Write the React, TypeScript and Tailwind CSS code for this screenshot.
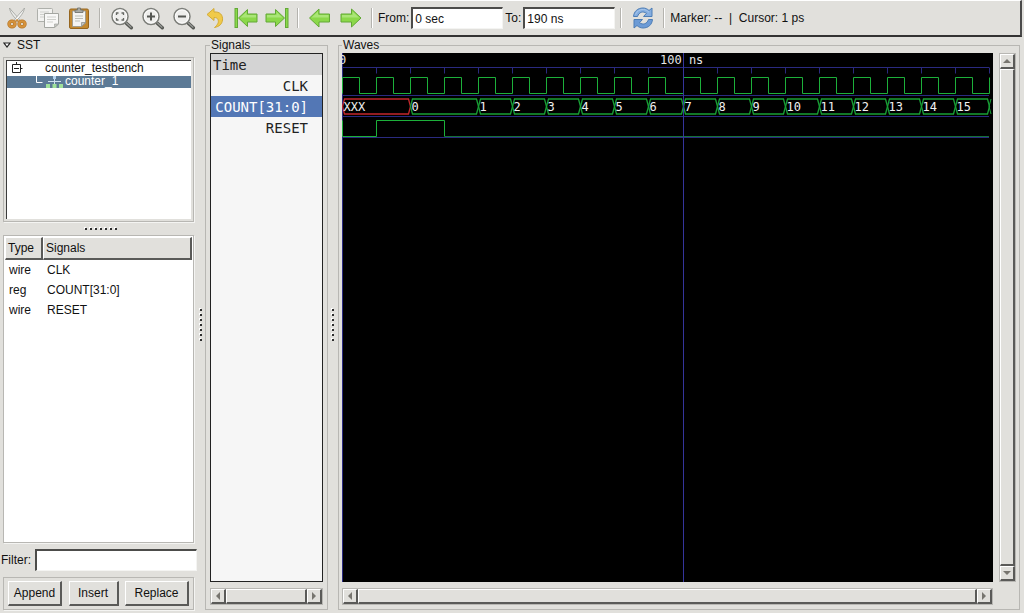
import type { ReactNode } from 'react';

const signals = [
  { type: 'wire', name: 'CLK' },
  { type: 'reg', name: 'COUNT[31:0]' },
  { type: 'wire', name: 'RESET' },
];

// One clock period is 10 ns
const PERIOD = 34;
const PERIODS = 19;
const END = PERIOD * PERIODS + 1;

const busValues = [
  { label: 'XXX', start: 0, end: 2 },
  { label: '0', start: 2, end: 4 },
  ...Array.from({ length: 15 }, (_, i) => ({ label: String(i + 1), start: i + 4, end: i + 5 })),
];

const periodX = (n: number) => Math.round(n * 34.05) + 0.5;

const clockPath = Array.from({ length: PERIODS }, (_, i) => {
  const x = periodX(i);
  return `${i === 0 ? 'M' : 'L'}${x} 40.5V24.5H${x + 17}V40.5H${periodX(i + 1)}`;
}).join('') + 'V24.5';

function ToolButton({ label, children }: { label: string; children: ReactNode }) {
  return (
    <button type="button" aria-label={label} className="flex h-7 w-[31px] shrink-0 items-center justify-center">
      <svg viewBox="0 0 24 24" className="size-6">{children}</svg>
    </button>
  );
}

function Separator() {
  return (
    <div className="flex w-3 shrink-0 justify-center">
      <div className="h-5 w-0.5 border-l border-r border-l-[#b4b3ae] border-r-white" />
    </div>
  );
}

function Magnifier({ children }: { children: ReactNode }) {
  return (
    <>
      <path d="M15.5 16.5 L21.3 21.8" stroke="#555753" strokeWidth="3.4" strokeLinecap="round" />
      <path d="M16.5 17 L21 21.2" stroke="#999b97" strokeWidth="1.2" strokeLinecap="round" />
      <circle cx="10" cy="10.5" r="8" fill="#eeeeec" stroke="#7c7e79" strokeWidth="1.5" />
      <circle cx="10" cy="10.5" r="6.6" fill="none" stroke="#fff" strokeWidth="0.9" />
      {children}
    </>
  );
}

function Grip({ vertical }: { vertical?: boolean }) {
  return (
    <div className={vertical ? 'flex flex-col gap-[3px]' : 'flex gap-[3px]'}>
      {Array.from({ length: 7 }, (_, i) => (
        <div key={i} className="size-0.5 bg-[#2e2e2e] shadow-[-1px_-1px_0_#fff]" />
      ))}
    </div>
  );
}

const raised = 'border-t border-l border-r-2 border-b-2 border-t-white border-l-white border-r-[#5a5a58] border-b-[#5a5a58] bg-[#e1e0dc]';
const frame = 'border border-[#b8b7b3] shadow-[1px_1px_0_#f4f4f2]';
const entry = 'h-[22px] min-w-0 border-t-2 border-l-2 border-r border-b border-t-[#4c4c4a] border-l-[#4c4c4a] border-r-[#f4f4f2] border-b-[#f4f4f2] bg-white px-0.5 outline-none';

function ScrollArrow({ label, points }: { label: string; points: string }) {
  return (
    <button type="button" aria-label={label} className={`flex size-[15px] shrink-0 items-center justify-center ${raised}`}>
      <svg viewBox="0 0 8 8" className="size-2"><polygon points={points} fill="#77756f" /></svg>
    </button>
  );
}

function HorizontalScroll() {
  return (
    <div className="flex h-[17px] border border-[#b8b7b3] bg-[#e1e0dc]">
      <ScrollArrow label="Scroll left" points="6,0 6,8 2,4" />
      <div className={`h-[15px] flex-1 ${raised}`} />
      <ScrollArrow label="Scroll right" points="2,0 2,8 6,4" />
    </div>
  );
}

function Toolbar() {
  return (
    <header className="mr-0.5 flex h-[37px] shrink-0 items-center border-t border-r-2 border-b-2 border-t-white border-r-[#4a4a4a] border-b-[#333] pl-px">
      <ToolButton label="Cut">
        <path d="M4.5 2 C5 6 8 10 13.5 16 L15 14.5 C12 10 7.5 6 4.5 2Z" fill="#eeeeec" stroke="#a4a6a1" strokeWidth="0.9" />
        <path d="M19.5 2 C19 6 16 10 10.5 16 L9 14.5 C12 10 16.5 6 19.5 2Z" fill="#f6f6f5" stroke="#a4a6a1" strokeWidth="0.9" />
        <ellipse cx="7" cy="18" rx="3" ry="2.7" fill="none" stroke="#b4762a" strokeWidth="3.4" />
        <ellipse cx="17" cy="18" rx="3" ry="2.7" fill="none" stroke="#b4762a" strokeWidth="3.4" />
        <ellipse cx="7" cy="18" rx="3" ry="2.7" fill="none" stroke="#d6933c" strokeWidth="2" />
        <ellipse cx="17" cy="18" rx="3" ry="2.7" fill="none" stroke="#d6933c" strokeWidth="2" />
        <path d="M10 14.5 L12 13 L14 14.5 L12 16Z" fill="#c98a3a" />
      </ToolButton>
      <ToolButton label="Copy">
        <rect x="1.5" y="2.5" width="15" height="13" rx="1" fill="#f2f2f0" stroke="#aeb0ab" />
        <path d="M4 6h9M4 8.5h8M4 11h5" stroke="#cfd0cc" />
        <path d="M8.5 7.5h14v10.500l-4 3.500h-10z" fill="#f8f8f7" stroke="#a4a6a1" />
        <path d="M11 11h9M11 13.500h9M11 16h6" stroke="#cfd0cc" />
        <path d="M22.500 18h-4v3.500z" fill="#c6c7c3" stroke="#a4a6a1" strokeWidth="0.7" />
      </ToolButton>
      <ToolButton label="Paste">
        <rect x="2.500" y="3" width="19" height="19.500" rx="1.500" fill="#c4892f" stroke="#96661f" />
        <path d="M5.500 5h13v12l-4 3.500h-9z" fill="#f4f4f2" stroke="#94958f" strokeWidth="0.8" />
        <path d="M8 10h8M8 12.500h8M8 15h5" stroke="#babdb6" />
        <path d="M18.500 16.500h-4v4z" fill="#c3c5c0" stroke="#888a85" strokeWidth="0.7" />
        <path d="M8 6.500V4h2.500V2h3v2H16v2.500z" fill="#a9aba6" stroke="#73756f" strokeWidth="0.9" />
      </ToolButton>
      <Separator />
      <ToolButton label="Zoom fit">
        <Magnifier>
          <path d="M6.500 9V7h2M11.500 7h2v2M13.500 12v2h-2M8.500 14h-2v-2" fill="none" stroke="#666864" strokeWidth="1.300" />
        </Magnifier>
      </ToolButton>
      <ToolButton label="Zoom in">
        <Magnifier><path d="M6 10.500h8M10 6.500v8" stroke="#555753" strokeWidth="2" /></Magnifier>
      </ToolButton>
      <ToolButton label="Zoom out">
        <Magnifier><path d="M6 10.500h8" stroke="#555753" strokeWidth="2" /></Magnifier>
      </ToolButton>
      <ToolButton label="Undo">
        <path d="M4 8.500 L11 2.500 V6 C17 5.500 20 9 19.500 14 C19 18 16.500 20.500 11.500 21.500 C15 18.500 16 16 15 13.500 C14.300 12 13 11.500 11 11.500 V14.500Z" fill="#f0ca4a" stroke="#d3ab37" strokeWidth="1" strokeLinejoin="round" />
      </ToolButton>
      <ToolButton label="Go to start">
        <rect x="1" y="2.500" width="2.500" height="19" fill="#8bd84a" stroke="#62a836" />
        <path d="M4.500 12 L13.500 3.500 V8 H23 V16 H13.500 V20.500Z" fill="#8bd84a" stroke="#62a836" strokeLinejoin="round" />
        <path d="M6.500 11.500 L12.500 6 V9 H22 V11.500Z" fill="#aae577" />
      </ToolButton>
      <ToolButton label="Go to end">
        <rect x="20.500" y="2.500" width="2.500" height="19" fill="#8bd84a" stroke="#62a836" />
        <path d="M19.500 12 L10.500 3.500 V8 H1 V16 H10.500 V20.500Z" fill="#8bd84a" stroke="#62a836" strokeLinejoin="round" />
        <path d="M17.500 11.500 L11.500 6 V9 H2 V11.500Z" fill="#aae577" />
      </ToolButton>
      <Separator />
      <ToolButton label="Previous edge">
        <path d="M1.500 12 L11 3 V8 H21.500 V16 H11 V21Z" fill="#8bd84a" stroke="#62a836" strokeLinejoin="round" />
        <path d="M3.500 11.500 L10 5.500 V9 H20.500 V11.500Z" fill="#aae577" />
      </ToolButton>
      <ToolButton label="Next edge">
        <path d="M22 12 L12.500 3 V8 H2 V16 H12.500 V21Z" fill="#8bd84a" stroke="#62a836" strokeLinejoin="round" />
        <path d="M20 11.500 L13.500 5.500 V9 H3 V11.500Z" fill="#aae577" />
      </ToolButton>
      <Separator />
      <label htmlFor="from" className="pr-0.5">From:</label>
      <input id="from" defaultValue="0 sec" className={`${entry} w-[92px]`} />
      <label htmlFor="to" className="pr-0.5 pl-0.5">To:</label>
      <input id="to" defaultValue="190 ns" className={`${entry} w-[92px]`} />
      <Separator />
      <ToolButton label="Reload">
        <path d="M2.500 10.500 C3 5.500 6.500 2 12 2 C14.500 2 16.500 3 18 4.500 L21 2 V10.500 H12.500 L15.500 7.300 C12 4.800 8 6 6.500 10.500Z" fill="#84ade0" stroke="#4d7db5" strokeLinejoin="round" />
        <path d="M21.500 13.500 C21 18.500 17.500 22 12 22 C9.500 22 7.500 21 6 19.500 L3 22 V13.500 H11.500 L8.500 16.700 C12 19.200 16 18 17.500 13.500Z" fill="#6c9bd6" stroke="#4d7db5" strokeLinejoin="round" />
        <path d="M4.500 8.500 C6 5 9 3.300 12.500 3.500 C14.500 3.600 16.500 4.800 18 6.300" fill="none" stroke="#a9c7ea" />
      </ToolButton>
      <Separator />
      <p className="whitespace-pre">Marker: --  |  Cursor: 1 ps</p>
    </header>
  );
}

function Sidebar() {
  return (
    <aside className="flex w-[197px] shrink-0 flex-col pb-[3px]">
      <h2 className="flex h-5 shrink-0 items-center gap-1.5 pb-1 pl-[3px]">
        <svg viewBox="0 0 8 8" className="size-2"><path d="M1 2h6L4 6z" fill="#fff" stroke="#222" strokeWidth="1.200" /></svg>
        SST
      </h2>
      <div className={`mr-[3px] ml-[3px] h-[165px] shrink-0 p-0.5 ${frame}`}>
        <ul className="h-full border-t border-l border-[#3c3c3c] bg-white">
          <li className="flex h-[15px] items-center leading-[15px]">
            <svg viewBox="0 0 16 15" className="h-[15px] w-4 shrink-0" fill="none" stroke="#222">
              <path d="M5.500 3.500h8v8h-8zM7 7.500h5M9.500 1v2M13.500 7.500h2" />
            </svg>
            <span className="pl-[22px]">counter_testbench</span>
          </li>
          <li className="flex h-3 items-center bg-[#5c7a96] leading-3 text-white">
            <svg viewBox="0 0 56 12" className="h-3 w-14 shrink-0">
              <path d="M29.500 0v6.500h6" fill="none" stroke="#fff" />
              <path d="M47.500 1v7M41 5.500h13" fill="none" stroke="#cfe0ee" />
              <rect x="46" y="0" width="3" height="3" fill="#b4d2ee" />
              <path d="M39 8h4v4h-4zM45.500 8h4v4h-4zM52 8h4v4h-4z" fill="#9fe09a" />
            </svg>
            <span className="pb-0.5 pl-0.5">counter_1</span>
          </li>
        </ul>
      </div>
      <div className="flex h-[13px] shrink-0 items-center justify-center pl-1"><Grip /></div>
      <div className={`mr-[3px] ml-[3px] min-h-0 flex-1 bg-white p-px ${frame}`}>
        <table className="w-full table-fixed border-separate border-spacing-0 text-left">
          <thead>
            <tr className="h-[23px]">
              <th className={`w-[38px] pl-0.5 font-normal ${raised}`}>Type</th>
              <th className={`pl-0.5 font-normal ${raised}`}>Signals</th>
            </tr>
          </thead>
          <tbody>
            {signals.map((signal) => (
              <tr key={signal.name} className="h-5">
                <td className="pl-1">{signal.type}</td>
                <td className="pl-1">{signal.name}</td>
              </tr>
            ))}
          </tbody>
        </table>
      </div>
      <div className="flex h-[34px] shrink-0 items-center gap-1 pl-px">
        <label htmlFor="filter">Filter:</label>
        <input id="filter" className={`${entry} flex-1`} />
      </div>
      <div className={`mr-[3px] ml-[3px] flex h-[33px] shrink-0 items-center justify-between px-1 ${frame}`}>
        <button type="button" className={`h-[25px] w-[54px] ${raised}`}>Append</button>
        <button type="button" className={`h-[25px] w-[50px] ${raised}`}>Insert</button>
        <button type="button" className={`h-[25px] w-16 ${raised}`}>Replace</button>
      </div>
    </aside>
  );
}

function SignalList() {
  return (
    <fieldset className="mt-px mb-[3px] flex w-[123px] shrink-0 flex-col border border-[#b8b7b3] px-1 pb-1">
      <legend className="h-[15px] px-px leading-[15px]">Signals</legend>
      <div className="min-h-0 flex-1 border border-[#222] bg-[#f6f6f6] font-['DejaVu_Sans_Mono',monospace] text-sm leading-[22px] text-[#222]">
        <div className="h-[21px] bg-[#d4d4d4] pl-0.5">Time</div>
        <div className="h-[21px] pr-[14px] text-right">CLK</div>
        <div className="h-[21px] bg-[#5377b5] pr-[14px] text-right text-white">COUNT[31:0]</div>
        <div className="h-[21px] pr-[14px] text-right">RESET</div>
      </div>
      <div className="pt-1.5"><HorizontalScroll /></div>
    </fieldset>
  );
}

function Waves() {
  return (
    <fieldset className="mt-px mr-1 mb-[3px] flex min-w-0 flex-1 flex-col border border-[#b8b7b3] px-[3px] pb-1">
      <legend className="h-[15px] px-px leading-[15px]">Waves</legend>
      <div className="grid min-h-0 flex-1 grid-cols-[minmax(0,1fr)_17px] grid-rows-[minmax(0,1fr)_17px] gap-x-[6px] gap-y-1.5">
        <div className="min-h-0 overflow-hidden bg-black">
          <svg className="block h-full w-full font-['DejaVu_Sans_Mono',monospace] text-xs" fill="none">
            {/* time ruler and row separators */}
            <g stroke="#2a2a80">
              <path d={`M0 14.500H${END}M0 42.500H${END}M0 63.500H${END}M0 84.500H${END}`} />
              {Array.from({ length: PERIODS }, (_, i) => (
                <path key={i} d={`M${periodX(i + 1)} 14.500V20.500`} />
              ))}
              <line x1="0.5" y1="0" x2="0.5" y2="100%" />
            </g>
            <text x="-3" y="11" fill="#e6e6e6">0</text>
            <text x="318" y="11" fill="#e6e6e6">100 ns</text>

            <path d={clockPath} stroke="#1cb03a" />

            {busValues.map(({ label, start, end }) => {
              const a = periodX(start);
              const b = periodX(end);
              return (
                <g key={label}>
                  <path
                    d={`M${a} 53.500L${a + 2} 46H${b - 2}L${b} 53.500L${b - 2} 61H${a + 2}Z`}
                    stroke={label === 'XXX' ? '#c3272b' : '#18a035'}
                    strokeWidth="1.300"
                  />
                  <text x={a + 1} y="58" fill="#f0f0f0">{label}</text>
                </g>
              );
            })}
            <path d={`M${END + 2} 46L${END} 53.500L${END + 2} 61`} stroke="#18a035" />

            <path d={`M0.500 67.500V83.500H${periodX(1)}V67.500H${periodX(3)}V83.500`} stroke="#1cb03a" />
            <path d={`M${periodX(3)} 83.500H${END}`} stroke="#157038" />
            <line x1="341.5" y1="0" x2="341.5" y2="100%" stroke="#34349c" />
          </svg>
        </div>
        <div className="flex flex-col border border-[#b8b7b3]">
          <ScrollArrow label="Scroll up" points="0,6 8,6 4,2" />
          <div className={`w-[15px] flex-1 ${raised}`} />
          <ScrollArrow label="Scroll down" points="0,2 8,2 4,6" />
        </div>
        <HorizontalScroll />
      </div>
    </fieldset>
  );
}

export default function App() {
  return (
    <div className="flex h-screen flex-col overflow-hidden bg-[#e1e0dc] font-['Liberation_Sans',Arial,sans-serif] text-xs text-[#111]">
      <Toolbar />
      <main className="flex min-h-0 flex-1">
        <Sidebar />
        <div className="flex w-2 shrink-0 items-center justify-center"><Grip vertical /></div>
        <SignalList />
        <div className="flex w-2.5 shrink-0 items-center justify-center"><Grip vertical /></div>
        <Waves />
      </main>
    </div>
  );
}
